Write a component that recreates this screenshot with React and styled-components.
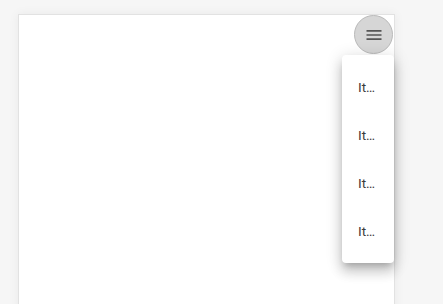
import React from "react";
import styled, { createGlobalStyle } from "styled-components";

const GlobalStyle = createGlobalStyle`
  html, body {
    margin: 0;
    padding: 0;
    background: #f6f6f6;
    font-family: Roboto, "Liberation Sans", sans-serif;
  }
`;

const Page = styled.div`
  padding: 14px 0 0 18px;
  height: 304px;
  box-sizing: border-box;
  overflow: hidden;
`;

const Card = styled.div`
  position: relative;
  width: 377px;
  height: 310px;
  box-sizing: border-box;
  background: #fff;
  border: 1px solid #e2e2e2;
  box-shadow: 0 0 10px rgba(0, 0, 0, 0.06);
`;

const MenuButton = styled.button`
  position: absolute;
  top: 0;
  right: 1px;
  width: 39px;
  height: 39px;
  padding: 0;
  border-radius: 50%;
  border: 1.5px solid #bababa;
  background: #d6d6d6;
  display: flex;
  align-items: center;
  justify-content: center;
  cursor: pointer;
`;

const Menu = styled.ul`
  position: absolute;
  top: 40px;
  right: 0;
  width: 52px;
  margin: 0;
  padding: 8px 0;
  list-style: none;
  background: #fff;
  border-radius: 4px;
  box-shadow: 0 5px 6px -3px rgba(0, 0, 0, 0.2), 0 9px 12px 1px rgba(0, 0, 0, 0.14),
    0 3px 16px 2px rgba(0, 0, 0, 0.12);
`;

const Item = styled.li`
  height: 48px;
  padding: 0 14px 0 16px;
  display: flex;
  align-items: center;
  font-size: 13.5px;
  color: #3c3c3c;
`;

const Label = styled.span`
  display: block;
  width: 22px;
  white-space: nowrap;
  overflow: hidden;
  text-overflow: ellipsis;
`;

const MenuIcon = () => (
  <svg width="20" height="20" viewBox="0 0 24 24">
    <path d="M3 18h18v-2H3v2zm0-5h18v-2H3v2zm0-7v2h18V6H3z" fill="#555" />
  </svg>
);

const items = ["Item 1", "Item 2", "Item 3", "Item 4"];

export default function App() {
  return (
    <>
      <GlobalStyle />
      <Page>
        <Card>
          <MenuButton aria-label="menu">
            <MenuIcon />
          </MenuButton>
          <Menu>
            {items.map((it) => (
              <Item key={it}>
                <Label>{it}</Label>
              </Item>
            ))}
          </Menu>
        </Card>
      </Page>
    </>
  );
}
